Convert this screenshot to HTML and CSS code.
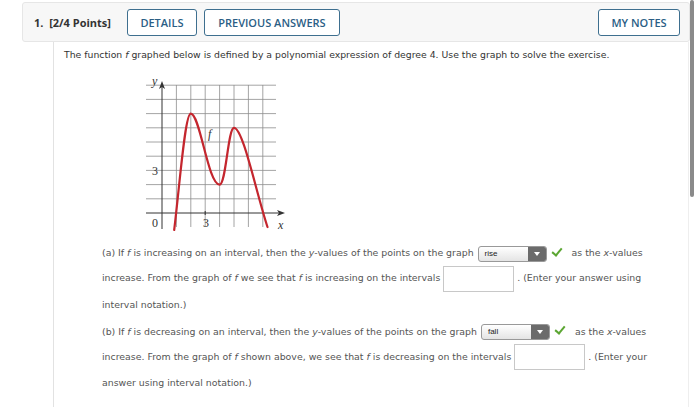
FILE: index.html
```html
<!DOCTYPE html>
<html>
<head>
<meta charset="utf-8">
<link rel="stylesheet" href="styles.css">
</head>
<body>
<div class="scrollbar"></div>
<header class="qhead">
  <span class="qnum">1.&nbsp; [2/4 Points]</span>
  <button class="btn btn-details">DETAILS</button>
  <button class="btn btn-prev">PREVIOUS ANSWERS</button>
  <button class="btn btn-notes">MY NOTES</button>
</header>
<main class="qbody">
  <p class="intro">The function <i>f</i> graphed below is defined by a polynomial expression of degree 4. Use the graph to solve the exercise.</p>
  <svg class="graph" width="150" height="160" viewBox="0 0 150 160">
    <g stroke="#8d8d8d" stroke-width="0.8">
      <line x1="36.4" y1="13" x2="36.4" y2="155"/>
      <line x1="50.8" y1="13" x2="50.8" y2="155"/>
      <line x1="65.2" y1="13" x2="65.2" y2="155"/>
      <line x1="79.6" y1="13" x2="79.6" y2="155"/>
      <line x1="94" y1="13" x2="94" y2="155"/>
      <line x1="108.4" y1="13" x2="108.4" y2="155"/>
      <line x1="122.8" y1="13" x2="122.8" y2="155"/>
      <line x1="6" y1="13.2" x2="136" y2="13.2"/>
      <line x1="6" y1="27.4" x2="136" y2="27.4"/>
      <line x1="6" y1="41.6" x2="136" y2="41.6"/>
      <line x1="6" y1="55.8" x2="136" y2="55.8"/>
      <line x1="6" y1="70" x2="136" y2="70"/>
      <line x1="6" y1="84.2" x2="136" y2="84.2"/>
      <line x1="6" y1="98.4" x2="136" y2="98.4"/>
      <line x1="6" y1="112.6" x2="136" y2="112.6"/>
      <line x1="6" y1="126.8" x2="136" y2="126.8"/>
    </g>
    <g stroke="#333" stroke-width="1">
      <line x1="22" y1="157" x2="22" y2="14"/>
      <line x1="6" y1="141" x2="140" y2="141"/>
      <line x1="65.2" y1="139" x2="65.2" y2="143"/>
    </g>
    <path d="M22,9 L19,17 L22,15 L25,17 Z" fill="#333"/>
    <path d="M145,141 L137,138 L139,141 L137,144 Z" fill="#333"/>
    <path d="M34.2,158 C40,110 45,41.6 50.8,41.6 C60,41.6 68,112.6 79.6,112.6 C86,112.6 88,55.8 94,55.8 C103,55.8 116,120 127.5,155" fill="none" stroke="#c4262e" stroke-width="2.2" stroke-linecap="round"/>
    <g font-family="'Liberation Serif', serif" font-size="12" fill="#333">
      <text x="12" y="13" font-style="italic">y</text>
      <text x="12" y="155">0</text>
      <text x="63" y="155">3</text>
      <text x="12" y="103">3</text>
      <text x="138" y="157" font-style="italic">x</text>
      <text x="68" y="66" font-style="italic">f</text>
    </g>
  </svg>
  <div class="part">
    (a) If <i>f</i> is increasing on an interval, then the <i>y</i>-values of the points on the graph
    <span class="select"><span class="select-val">rise</span><span class="select-btn"></span></span><span class="check"></span>
    as the <i>x</i>-values increase. From the graph of <i>f</i> we see that <i>f</i> is increasing on the intervals
    <span class="answer"></span> . (Enter your answer using interval notation.)
  </div>
  <div class="part">
    (b) If <i>f</i> is decreasing on an interval, then the <i>y</i>-values of the points on the graph
    <span class="select"><span class="select-val">fall</span><span class="select-btn"></span></span><span class="check"></span>
    as the <i>x</i>-values increase. From the graph of <i>f</i> shown above, we see that <i>f</i> is decreasing on the intervals
    <span class="answer"></span> . (Enter your answer using interval notation.)
  </div>
</main>
</body>
</html>
```
FILE: styles.css
```css
html, body {
  margin: 0;
  padding: 0;
  background: #fff;
  height: 100%;
  overflow: hidden;
}
body {
  font-family: "DejaVu Sans", Verdana, sans-serif;
  color: #333;
}
.scrollbar {
  position: absolute;
  top: 0;
  left: 690px;
  width: 4px;
  height: 197px;
  background: #8a8a8a;
  border-radius: 2px;
}
.qhead {
  display: flex;
  align-items: center;
  box-sizing: border-box;
  margin: 2px 0 0 22px;
  width: 668px;
  height: 40px;
  padding: 0 9px 0 11px;
  background: #f7f7f7;
  border: 1px solid #e6e6e6;
  border-radius: 3px;
  font-family: "Open Sans", sans-serif;
}
.qnum {
  font-size: 11px;
  font-weight: 700;
  color: #333;
  margin-right: 16px;
}
.btn {
  box-sizing: border-box;
  height: 27px;
  padding: 0 12px;
  background: #fff;
  border: 1px solid #3e6f8f;
  border-radius: 3px;
  font-family: "Open Sans", sans-serif;
  font-size: 11px;
  font-weight: 600;
  color: #2b5e85;
}
.btn-details { width: 70px; }
.btn-prev { width: 136px; margin-left: 7px; }
.btn-notes { width: 82px; margin-left: auto; }
.qbody {
  box-sizing: border-box;
  margin-left: 53px;
  width: 636px;
  height: 370px;
  border-left: 1px solid #e2e2e2;
  border-right: 1px solid #eeeeee;
  padding: 7px 0 0 10px;
}
.intro {
  margin: 0;
  font-size: 9.3px;
  line-height: 11px;
  color: #333;
}
.graph {
  display: block;
  margin: 12px 0 0 76px;
}
.part {
  width: 556px;
  margin: 8px 0 0 38px;
  font-size: 9.4px;
  line-height: 25px;
  color: #555;
}
.part + .part {
  margin-top: 2px;
}
.select {
  display: inline-flex;
  box-sizing: border-box;
  width: 69px;
  height: 16px;
  vertical-align: middle;
  border: 1px solid #999;
  border-radius: 3px;
  background: linear-gradient(#ffffff, #e4e4e4);
  overflow: hidden;
  margin-left: 1px;
}
.select-val {
  flex: 1;
  padding-left: 6px;
  font-family: "Liberation Sans", Arial, sans-serif;
  font-size: 8px;
  line-height: 14px;
  color: #222;
}
.select-btn {
  width: 18px;
  background: #6b6b6b;
  position: relative;
}
.select-btn::after {
  content: "";
  position: absolute;
  left: 6px;
  top: 5px;
  border-left: 3px solid transparent;
  border-right: 3px solid transparent;
  border-top: 4px solid #fff;
}
.check {
  display: inline-block;
  width: 4px;
  height: 8px;
  margin: 0 9px 0 7px;
  border-right: 2.5px solid #5ba632;
  border-bottom: 2.5px solid #5ba632;
  transform: rotate(40deg);
  vertical-align: middle;
  position: relative;
  top: -3px;
}
.answer {
  display: inline-block;
  box-sizing: border-box;
  width: 71px;
  height: 26px;
  vertical-align: middle;
  border: 1px solid #c8c8c8;
  background: #fff;
}
```
